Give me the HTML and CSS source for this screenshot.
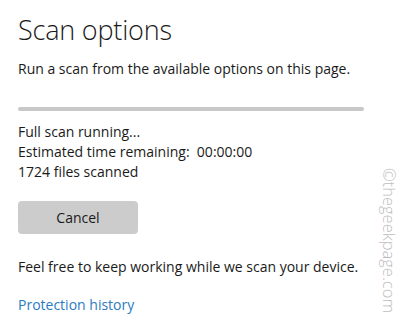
FILE: index.html
```html
<!DOCTYPE html>
<html lang="en">
<head>
    <meta charset="UTF-8">
    <title>Scan options</title>
    <link rel="stylesheet" href="styles.css">
</head>
<body>
    <div class="page">
        <h1 class="title">Scan options</h1>
        <p class="intro">Run a scan from the available options on this page.</p>

        <div class="progress"></div>

        <div class="status">
            <div>Full scan running...</div>
            <div>Estimated time remaining:&nbsp; 00:00:00</div>
            <div>1724 files scanned</div>
        </div>

        <button class="cancel-btn">Cancel</button>

        <p class="note">Feel free to keep working while we scan your device.</p>

        <a href="#" class="history-link">Protection history</a>
    </div>
    <div class="watermark">©thegeekpage.com</div>
</body>
</html>
```

FILE: styles.css
```css
body {
    margin: 0;
    padding: 0;
    background: #ffffff;
    font-family: "Open Sans", "Noto Sans", sans-serif;
    color: #1a1a1a;
    position: relative;
    height: 325px;
    overflow: hidden;
}

.page {
    padding: 10px 0 0 18px;
    width: 346px;
}

.title {
    margin: 0;
    font-size: 27px;
    font-weight: 300;
    line-height: 40px;
    letter-spacing: -0.2px;
}

.intro {
    margin: 9px 0 0;
    font-size: 14px;
    line-height: 20px;
}

.progress {
    margin-top: 28px;
    height: 4px;
    background: #c8c8c8;
    border-radius: 2px;
}

.status {
    margin-top: 11px;
    font-size: 14px;
    line-height: 20px;
}

.cancel-btn {
    display: block;
    margin-top: 19px;
    width: 120px;
    height: 33px;
    background: #cccccc;
    border: none;
    border-radius: 4px;
    font-family: inherit;
    font-size: 14px;
    color: #1a1a1a;
}

.note {
    margin: 23px 0 0;
    font-size: 14px;
    line-height: 20px;
}

.history-link {
    display: inline-block;
    margin-top: 18px;
    font-size: 14px;
    line-height: 20px;
    color: #2a7bbf;
    text-decoration: none;
}

/* vertical site stamp on the right edge */
.watermark {
    position: absolute;
    left: 401px;
    top: 168px;
    transform: rotate(90deg);
    transform-origin: left top;
    font-size: 16.5px;
    font-weight: 300;
    color: #bdbdbd;
    white-space: nowrap;
}
```
